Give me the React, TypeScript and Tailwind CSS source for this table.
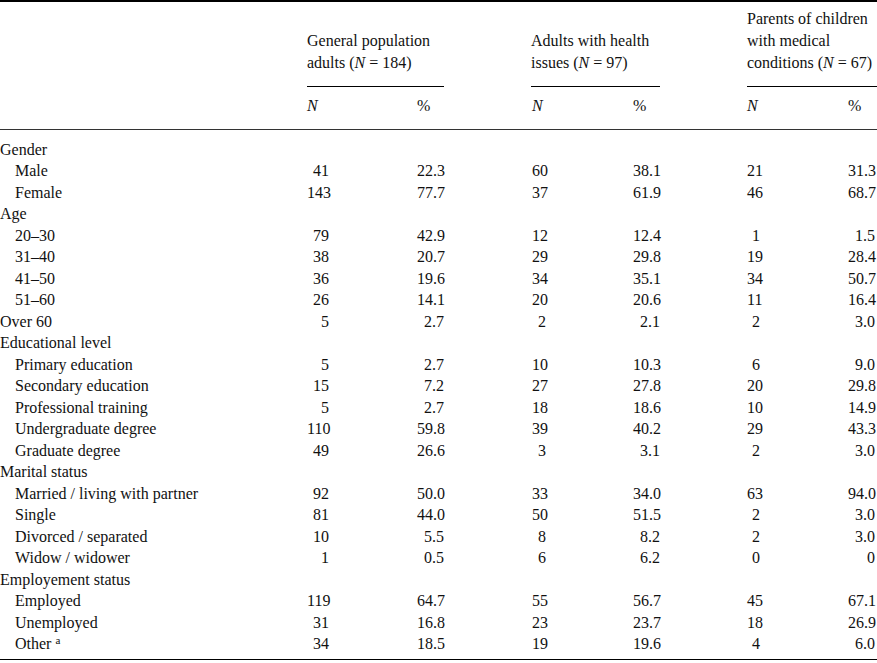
import React from "react";

type Row = {
  label: string;
  indent?: boolean;
  heading?: boolean;
  sup?: string;
  values?: [string, string, string, string, string, string];
};

const rows: Row[] = [
  { label: "Gender", heading: true },
  { label: "Male", indent: true, values: ["41", "22.3", "60", "38.1", "21", "31.3"] },
  { label: "Female", indent: true, values: ["143", "77.7", "37", "61.9", "46", "68.7"] },
  { label: "Age", heading: true },
  { label: "20–30", indent: true, values: ["79", "42.9", "12", "12.4", "1", "1.5"] },
  { label: "31–40", indent: true, values: ["38", "20.7", "29", "29.8", "19", "28.4"] },
  { label: "41–50", indent: true, values: ["36", "19.6", "34", "35.1", "34", "50.7"] },
  { label: "51–60", indent: true, values: ["26", "14.1", "20", "20.6", "11", "16.4"] },
  { label: "Over 60", values: ["5", "2.7", "2", "2.1", "2", "3.0"] },
  { label: "Educational level", heading: true },
  { label: "Primary education", indent: true, values: ["5", "2.7", "10", "10.3", "6", "9.0"] },
  { label: "Secondary education", indent: true, values: ["15", "7.2", "27", "27.8", "20", "29.8"] },
  { label: "Professional training", indent: true, values: ["5", "2.7", "18", "18.6", "10", "14.9"] },
  { label: "Undergraduate degree", indent: true, values: ["110", "59.8", "39", "40.2", "29", "43.3"] },
  { label: "Graduate degree", indent: true, values: ["49", "26.6", "3", "3.1", "2", "3.0"] },
  { label: "Marital status", heading: true },
  { label: "Married / living with partner", indent: true, values: ["92", "50.0", "33", "34.0", "63", "94.0"] },
  { label: "Single", indent: true, values: ["81", "44.0", "50", "51.5", "2", "3.0"] },
  { label: "Divorced / separated", indent: true, values: ["10", "5.5", "8", "8.2", "2", "3.0"] },
  { label: "Widow / widower", indent: true, values: ["1", "0.5", "6", "6.2", "0", "0"] },
  { label: "Employement status", heading: true },
  { label: "Employed", indent: true, values: ["119", "64.7", "55", "56.7", "45", "67.1"] },
  { label: "Unemployed", indent: true, values: ["31", "16.8", "23", "23.7", "18", "26.9"] },
  { label: "Other", sup: "a", indent: true, values: ["34", "18.5", "19", "19.6", "4", "6.0"] },
];

function NCell({ w, children }: { w: string; children?: React.ReactNode }) {
  return <div className={`${w} text-right whitespace-nowrap`}>{children}</div>;
}

export default function App() {
  return (
    <div className="w-[877px] bg-white text-[#111] font-[family-name:'Liberation_Serif','Times_New_Roman',serif] text-[16px] leading-[22px]">
      <div className="h-[1.5px] bg-black" />

      {/* column headers */}
      <div className="flex items-end pt-[6.5px]">
        <div className="w-[307px] shrink-0" />
        <div className="w-[137px] shrink-0">
          <div className="whitespace-nowrap">
            General population
            <br />
            adults (<i>N</i> = 184)
          </div>
        </div>
        <div className="ml-[87px] w-[129px] shrink-0">
          <div className="whitespace-nowrap">
            Adults with health
            <br />
            issues (<i>N</i> = 97)
          </div>
        </div>
        <div className="ml-[87px] w-[130px] shrink-0">
          <div className="whitespace-nowrap">
            Parents of children
            <br />
            with medical
            <br />
            conditions (<i>N</i> = 67)
          </div>
        </div>
      </div>

      <div className="flex mt-[12px]">
        <div className="w-[307px] shrink-0" />
        <div className="w-[137px] shrink-0 h-px bg-black" />
        <div className="ml-[87px] w-[129px] shrink-0 h-px bg-black" />
        <div className="ml-[87px] w-[130px] shrink-0 h-px bg-black" />
      </div>

      <div className="flex pt-[7.5px]">
        <div className="w-[307px] shrink-0" />
        <div className="w-[137px] shrink-0 flex justify-between">
          <i>N</i>
          <span className="w-[27px]">%</span>
        </div>
        <div className="ml-[88px] w-[128px] shrink-0 flex justify-between">
          <i>N</i>
          <span className="w-[27px]">%</span>
        </div>
        <div className="ml-[87px] w-[130px] shrink-0 flex justify-between">
          <i>N</i>
          <span className="w-[29px]">%</span>
        </div>
      </div>

      <div className="h-[1.5px] bg-[#333] mt-[12px]" />

      {/* body */}
      <div className="pt-[8.5px] pb-[4px] leading-[21.5px]">
        {rows.map((r) => (
          <div key={r.label} className="flex">
            <div className={`w-[307px] shrink-0 whitespace-nowrap ${r.indent ? "pl-[15px]" : ""}`}>
              {r.label}
              {r.sup && (
                <span className="text-[11px] leading-none ml-[4px] relative -top-[5px]">{r.sup}</span>
              )}
            </div>
            {r.values && (
              <>
                <div className="w-[137px] shrink-0 flex justify-between">
                  <NCell w="w-[22px]">{r.values[0]}</NCell>
                  <NCell w="w-[27px]">{r.values[1]}</NCell>
                </div>
                <div className="ml-[88px] w-[128px] shrink-0 flex justify-between">
                  <NCell w="w-[14px]">{r.values[2]}</NCell>
                  <NCell w="w-[27px]">{r.values[3]}</NCell>
                </div>
                <div className="ml-[87px] w-[128px] shrink-0 flex justify-between">
                  <NCell w="w-[13px]">{r.values[4]}</NCell>
                  <NCell w="w-[27px]">{r.values[5]}</NCell>
                </div>
              </>
            )}
          </div>
        ))}
      </div>

      <div className="h-[1.5px] bg-black" />
    </div>
  );
}
